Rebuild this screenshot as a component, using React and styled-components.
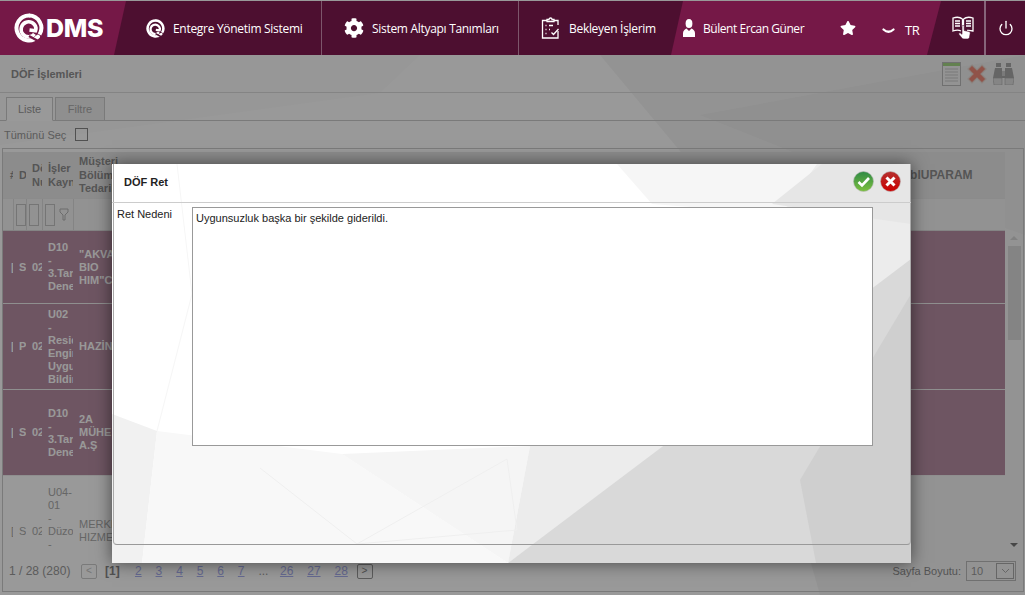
import React from 'react';
import styled, { createGlobalStyle } from 'styled-components';
import { FaCog, FaStar } from 'react-icons/fa';
import { FiPower } from 'react-icons/fi';

const GlobalStyle = createGlobalStyle`
  html, body {
    margin: 0;
    padding: 0;
    height: 595px;
    overflow: hidden;
    background: #fff;
  }
  * { box-sizing: border-box; }
`;

const bodyFont = `"Liberation Sans", Tahoma, sans-serif`;

const Shell = styled.div`
  position: relative;
  width: 1025px;
  height: 595px;
  overflow: hidden;
  font-family: ${bodyFont};
  font-size: 11px;
  color: #444;
`;

/* top bar */
const TopBar = styled.header`
  position: relative;
  z-index: 5;
  display: flex;
  height: 55px;
  border-top: 1px solid #999;
  background: #4d0f30;
  color: #fff;
  font-family: "Open Sans", sans-serif;
  font-size: 12px;
  letter-spacing: -0.3px;
`;

const LogoBox = styled.div`
  flex: 0 0 126px;
  display: flex;
  align-items: center;
  gap: 2px;
  padding-left: 14px;
  background: #751847;
  clip-path: polygon(0 0, 100% 0, 114px 100%, 0 100%);
`;

const LogoText = styled.span`
  font-family: Inter, sans-serif;
  font-weight: 800;
  font-size: 25px;
  letter-spacing: -0.3px;
`;

const NavItem = styled.div`
  flex: 0 0 ${(p) => p.$w}px;
  display: flex;
  align-items: center;
  gap: 8px;
  padding-left: ${(p) => p.$pad}px;
  border-right: ${(p) => (p.$line ? '1px solid #7d566b' : 'none')};
  white-space: nowrap;
`;

const UserBox = styled.div`
  flex: 0 0 270px;
  margin-left: -12px;
  display: flex;
  align-items: center;
  padding-left: 12px;
  background: #751847;
  clip-path: polygon(12px 0, 100% 0, 256px 100%, 0 100%);
`;

const UserName = styled.span`
  margin-left: 8px;
  width: 137px;
  white-space: nowrap;
  letter-spacing: -0.45px;
`;

const ChevronWrap = styled.span`
  display: flex;
  margin: 6px 0 0 26px;
`;

const Lang = styled.span`
  margin: 4px 0 0 10px;
  font-size: 13px;
`;

const BookBox = styled.div`
  flex: 0 0 48px;
  margin-left: -14px;
  padding-left: 25px;
  display: flex;
  align-items: center;
`;

const PowerBox = styled.div`
  flex: 1;
  display: flex;
  align-items: center;
  justify-content: center;
  border-left: 2px solid #86647a;
  margin-left: 9px;
  font-size: 16px;
`;

/* page below the bar */
const Page = styled.main`
  position: relative;
  height: 540px;
  background: #fff;
`;

const PageArt = styled.svg`
  position: absolute;
  inset: 0;
  width: 100%;
  height: 100%;
`;

const PageInner = styled.div`
  position: relative;
  display: flex;
  flex-direction: column;
  height: 100%;
`;

const TitleRow = styled.div`
  flex: 0 0 38px;
  display: flex;
  align-items: center;
  justify-content: space-between;
  padding: 0 11px 0 11px;
  border-bottom: 1px solid #ddd;
  font-weight: 700;
  color: #909090;
`;

const Tools = styled.div`
  display: flex;
  align-items: center;
  gap: 6px;
`;

const Tabs = styled.div`
  flex: 0 0 28px;
  display: flex;
  align-items: flex-end;
  gap: 2px;
  padding-left: 6px;
  border-bottom: 1px solid #ccc;
`;

const Tab = styled.div`
  width: ${(p) => p.$w}px;
  height: 24px;
  margin-bottom: -1px;
  display: flex;
  align-items: center;
  justify-content: center;
  border: 1px solid #ccc;
  border-bottom: ${(p) => (p.$active ? '1px solid #fff' : '1px solid #ccc')};
  background: ${(p) => (p.$active ? '#fff' : '#eee')};
  color: ${(p) => (p.$active ? '#999' : '#aaa')};
`;

const SelectRow = styled.div`
  flex: 0 0 27px;
  display: flex;
  align-items: center;
  gap: 9px;
  padding-left: 4px;
  color: #999;
`;

const CheckBox = styled.span`
  width: 13px;
  height: 13px;
  border: 1px solid #888;
`;

const GridFrame = styled.section`
  flex: 1;
  margin: 0 1px 3px 2px;
  padding: 3px 0 0 0;
  border: 1px solid #ccc;
  display: flex;
  flex-direction: column;
  min-height: 0;
`;

const cols = '10px 13px 16px 31px 120px 1fr';

const HeadRow = styled.div`
  flex: 0 0 46px;
  margin-right: 18px;
  display: grid;
  grid-template-columns: ${cols} 113px;
  align-items: center;
  background: #eaeaea;
  font-weight: 700;
  color: #8e8e8e;
  line-height: 13.5px;
`;

const HeadCell = styled.div`
  overflow: hidden;
  padding: 1px 0 0 ${(p) => p.$pad ?? 6}px;
  font-size: ${(p) => (p.$big ? 12 : 11)}px;
`;

const FilterRow = styled.div`
  flex: 0 0 33px;
  margin-right: 18px;
  display: grid;
  grid-template-columns: ${cols};
  align-items: center;
  background: #f3f3f3;
  border-bottom: 1px solid #ddd;
  border-top: 1px solid #e8e8e8;
`;

const FilterCell = styled.div`
  height: 100%;
  display: flex;
  align-items: center;
  gap: 4px;
  padding-left: 2px;
  border-left: ${(p) => (p.$line ? '1px solid #ddd' : 'none')};
`;

const FilterInput = styled.span`
  width: ${(p) => p.$w}px;
  height: 22px;
  border: 1px solid #c4c4c4;
`;

const BodyArea = styled.div`
  flex: 1;
  display: flex;
  min-height: 0;
  overflow: hidden;
`;

const Rows = styled.div`
  flex: 1;
  overflow: hidden;
`;

const Row = styled.div`
  height: ${(p) => p.$h}px;
  display: grid;
  grid-template-columns: ${cols};
  align-items: center;
  overflow: hidden;
  background: ${(p) => (p.$marked ? '#b88ea3' : 'transparent')};
  border-bottom: ${(p) => (p.$marked ? '1px solid #eee' : 'none')};
  font-weight: ${(p) => (p.$marked ? 700 : 400)};
  color: ${(p) => (p.$marked ? '#fff' : '#aaa')};
  line-height: 13px;
`;

const Cell = styled.div`
  overflow: hidden;
  padding-left: ${(p) => p.$pad ?? 6}px;
  white-space: nowrap;
`;

const Line = styled.div`
  white-space: nowrap;
`;

const ScrollBar = styled.div`
  flex: 0 0 18px;
  display: flex;
  flex-direction: column;
  align-items: center;
  padding-top: 5px;
  gap: 6px;
`;

const ScrollThumb = styled.div`
  width: 13px;
  height: 94px;
  background: #dcdcdc;
`;

const ScrollGap = styled.div`
  flex: 1;
`;

const ArrowUp = styled.div`
  width: 0;
  height: 0;
  border-left: 4px solid transparent;
  border-right: 4px solid transparent;
  border-bottom: 4px solid #d8d8d8;
`;

const ArrowDown = styled(ArrowUp)`
  border-bottom: none;
  border-top: 4px solid #777;
  margin-bottom: 6px;
`;

const Pager = styled.div`
  flex: 0 0 38px;
  display: flex;
  align-items: center;
  padding: 0 7px 2px 6px;
  color: #999;
  font-size: 12px;
`;

const PageCount = styled.span`
  width: 72px;
`;

const PageBox = styled.span`
  width: 16px;
  height: 15px;
  margin-right: ${(p) => p.$mr ?? 0}px;
  display: flex;
  align-items: center;
  justify-content: center;
  border: 1px solid ${(p) => (p.$dark ? '#999' : '#ccc')};
  border-radius: 2px;
  font-family: "Liberation Mono", monospace;
  font-size: 10px;
  color: ${(p) => (p.$dark ? '#888' : '#c4c4c4')};
`;

const CurrentPage = styled.b`
  margin-right: 15.3px;
  color: #888;
`;

const PageLink = styled.a`
  margin-right: ${(p) => p.$mr ?? 13.9}px;
  color: #a9aff0;
  text-decoration: underline;
`;

const Dots = styled.span`
  margin-right: 11.5px;
`;

const PageSize = styled.div`
  margin-left: auto;
  display: flex;
  align-items: center;
  gap: 5px;
  font-size: 11px;
  color: #8c8c8c;
`;

const SizeSelect = styled.div`
  width: 50px;
  height: 20px;
  display: flex;
  align-items: center;
  justify-content: space-between;
  padding: 0 1px 0 4px;
  border: 1px solid #bbb;
  color: #999;
`;

const SizeArrow = styled.span`
  width: 18px;
  height: 16px;
  border: 1px solid #aaa;
  display: flex;
  align-items: center;
  justify-content: center;
`;

/* dialog */
const Dim = styled.div`
  position: absolute;
  left: 0;
  right: 0;
  top: 55px;
  bottom: 0;
  background: rgba(0, 0, 0, 0.4);
  z-index: 3;
`;

const Dialog = styled.div`
  position: absolute;
  left: 112px;
  top: 164px;
  width: 799px;
  height: 399px;
  z-index: 4;
  background: #fff;
  box-shadow: 0 0 16px rgba(0, 0, 0, 0.55);
  font-size: 11px;
  color: #222;
`;

const DialogArt = styled.svg`
  position: absolute;
  inset: 0;
  width: 100%;
  height: 100%;
`;

const DialogFrame = styled.div`
  position: relative;
  height: 381px;
  margin-left: 1px;
  border-bottom: 1px solid #999;
  border-right: 1px solid #aaa;
  border-left: 1px solid #aaa;
  border-radius: 0 0 4px 4px;
`;

const DialogHead = styled.div`
  height: 39px;
  margin-left: -2px;
  margin-right: -1px;
  display: flex;
  align-items: center;
  justify-content: space-between;
  padding: 0 10px 3px 12px;
  border-bottom: 1px solid #ccc;
  font-weight: 700;
`;

const DialogActions = styled.div`
  display: flex;
  gap: 6px;
`;

const DialogBody = styled.div`
  display: flex;
  padding: 4px 0 0 3px;
`;

const FieldLabel = styled.label`
  flex: 0 0 75px;
  padding-top: 1px;
`;

const ReasonBox = styled.div`
  width: 681px;
  height: 239px;
  padding: 4px 3px;
  background: #fff;
  border: 1px solid #999;
`;

const QMark = ({ size = 30, dark }) => (
  <svg width={size} height={size} viewBox="0 0 30 30">
    <path d="M15 2.5a12.5 12.5 0 1 0 9 21.2" fill="none" stroke="#fff" strokeWidth="4" strokeLinecap="round" />
    <path d="M25.5 21.5A12.5 12.5 0 0 0 15 2.5" fill="none" stroke="#fff" strokeWidth="4" />
    <path d="M20.5 21A7.5 7.5 0 1 1 22 15c0 1-.2 2-.5 2.8l-6-.8" fill="none" stroke="#fff" strokeWidth="3.6" />
    <path d="M15 23l9 5" stroke={dark ? '#4d0f30' : '#751847'} strokeWidth="2.4" />
  </svg>
);

const ClipboardIcon = () => (
  <svg width="20" height="22" viewBox="0 0 20 22" fill="none" stroke="#fff" strokeWidth="1.3">
    <path d="M6 3.5H1.5v17.5h15.5V14M13 3.5h4V8" />
    <path d="M6 4.5V2.5h2a1.5 1.5 0 0 1 3 0h2v2z" />
    <path d="M4.5 8.5h1M4.5 12.5h1M4.5 16.5h1M8 8.5h4M8 12.5h1" strokeWidth="1.6" />
    <path d="M10.5 15.5l2 2 5-5.5" />
  </svg>
);

const UserIcon = () => (
  <svg width="12" height="18" viewBox="0 0 12 18" fill="#fff">
    <ellipse cx="6" cy="4.5" rx="3.4" ry="4.5" />
    <path d="M0 18v-4c0-2.5 2.5-4 3.5-4.5L6 12l2.5-2.5c1 .5 3.5 2 3.5 4.5v4z" />
  </svg>
);

const SmileChevron = () => (
  <svg width="13" height="7" viewBox="0 0 13 7">
    <path d="M1.5 1.5q5 4.500 10 0" fill="none" stroke="#fff" strokeWidth="2.2" strokeLinecap="round" />
  </svg>
);

const BookHandIcon = () => (
  <svg width="22" height="24" viewBox="0 0 22 24" fill="none" stroke="#fff" strokeWidth="1.3">
    <path d="M10.5 3C8 1 4 1 1 2v13c3-1 6-1 8 0M11.5 3c2.5-2 6.5-2 9.5-1v13c-2-.5-4-.8-6-.5M10.5 3v8M11.5 3v8" />
    <path d="M3 5h5M3 7.5h5M3 10h5M14 5h5M14 7.5h5M14 10h5" />
    <path
      d="M10 10.5c0-1.5 2.2-1.5 2.2 0v4l5 1c.8.3 1 1 1 1.8l-.7 4c-.3 1.2-1 1.7-2 1.7h-3.5c-1 0-1.7-.5-2.3-1.3L7 18.5c-.7-1.200.7-2.200 1.700-1.300l1.300 1.100z"
      fill="#fff"
      stroke="#4d0f30"
      strokeWidth=".6"
    />
  </svg>
);

const TableIcon = () => (
  <svg width="19" height="24" viewBox="0 0 19 24">
    <rect x=".5" y=".5" width="18" height="23" fill="#f5f5f5" stroke="#bbb" />
    <rect x="1" y="1" width="17" height="3" fill="#a6d785" />
    <path d="M3 7h13M3 10h13M3 13h13M3 16h13M3 19h13" stroke="#c9c9c9" />
  </svg>
);

const CrossIcon = () => (
  <svg width="20" height="20" viewBox="0 0 20 20">
    <path d="M5 1l5 5 5-5 4 4-5 5 5 5-4 4-5-5-5 5-4-4 5-5-5-5z" fill="#f08a7a" stroke="#e8d8d0" strokeWidth="1.2" />
  </svg>
);

const BinocularsIcon = () => (
  <svg width="21" height="22" viewBox="0 0 21 22">
    <rect x="3" y="0" width="5" height="4" fill="#a8a8a8" />
    <rect x="13" y="0" width="5" height="4" fill="#a8a8a8" />
    <path d="M2 5h7v3h3V5h7l2 10H0z" fill="#a8a8a8" />
    <path d="M9 8h3v5H9z" fill="#ccc" />
    <path d="M0 15h9v7H1zM12 15h9l-1 7h-8z" fill="#dedede" stroke="#aaa" strokeWidth=".6" />
  </svg>
);

const CircleButton = ({ from, to, children }) => (
  <svg width="21" height="21" viewBox="0 0 21 21">
    <defs>
      <linearGradient id={from.slice(1)} x1="0" y1="0" x2="0" y2="1">
        <stop offset="0" stopColor={from} />
        <stop offset="1" stopColor={to} />
      </linearGradient>
    </defs>
    <circle cx="10.5" cy="10.5" r="10" fill={`url(#${from.slice(1)})`} stroke="#bbb" strokeWidth=".6" />
    {children}
  </svg>
);

const FunnelIcon = () => (
  <svg width="10" height="13" viewBox="0 0 10 13" fill="none" stroke="#b5b5b5">
    <path d="M1 1h8v3L6 7v5H4V7L1 4z" />
  </svg>
);

const rows = [
  { h: 73, marked: true, a: '[', b: 'S', work: ['D10', '-', '3.Tar', 'Dene'], who: ['"AKVA', 'BIO', 'HIM"C'] },
  { h: 86, marked: true, a: '[', b: 'Pl', work: ['U02', '-', 'Resid', 'Engir', 'Uygu', 'Bildiri'], who: ['HAZİN'] },
  { h: 86, marked: true, a: '[', b: 'S', work: ['D10', '-', '3.Tar', 'Dene'], who: ['2A', 'MÜHE', 'A.Ş'] },
  { h: 110, a: '[', b: 'S', work: ['U04-', '01', '-', 'Düzo', '-', 'Müş', ''], who: ['MERKI', 'HIZME'] },
];

const pages = ['2', '3', '4', '5', '6', '7'];

export default function App() {
  return (
    <Shell>
      <GlobalStyle />
      <TopBar>
        <LogoBox>
          <QMark />
          <LogoText>DMS</LogoText>
        </LogoBox>
        <NavItem $w={196} $pad={20} $line>
          <QMark size={19} dark />
          Entegre Yönetim Sistemi
        </NavItem>
        <NavItem $w={197} $pad={22} $line>
          <FaCog size={20} />
          Sistem Altyapı Tanımları
        </NavItem>
        <NavItem $w={164} $pad={22}>
          <ClipboardIcon />
          Bekleyen İşlerim
        </NavItem>
        <UserBox>
          <UserIcon />
          <UserName>Bülent Ercan Güner</UserName>
          <FaStar size={16} />
          <ChevronWrap>
            <SmileChevron />
          </ChevronWrap>
          <Lang>TR</Lang>
        </UserBox>
        <BookBox>
          <BookHandIcon />
        </BookBox>
        <PowerBox>
          <FiPower />
        </PowerBox>
      </TopBar>

      <Page>
        <PageArt viewBox="0 0 1025 540" preserveAspectRatio="none">
          <polygon points="600,0 1025,0 1025,540 820,540 700,120" fill="#f6f6f6" />
          <polygon points="700,60 1025,0 1025,180 850,120" fill="#f0f0f0" />
          <polygon points="0,0 420,0 380,38 0,90" fill="#fcfcfc" />
        </PageArt>
        <PageInner>
          <TitleRow>
            DÖF İşlemleri
            <Tools>
              <TableIcon />
              <CrossIcon />
              <BinocularsIcon />
            </Tools>
          </TitleRow>
          <Tabs>
            <Tab $w={47} $active>Liste</Tab>
            <Tab $w={50}>Filtre</Tab>
          </Tabs>
          <SelectRow>
            Tümünü Seç
            <CheckBox />
          </SelectRow>
          <GridFrame>
            <HeadRow>
              <HeadCell $pad={7}>#</HeadCell>
              <HeadCell>D</HeadCell>
              <HeadCell><Line>Dö</Line><Line>Nu</Line></HeadCell>
              <HeadCell><Line>İşler</Line><Line>Kayn</Line></HeadCell>
              <HeadCell><Line>Müşteri</Line><Line>Bölüm</Line><Line>Tedarik</Line></HeadCell>
              <HeadCell />
              <HeadCell $big $pad={5}><Line>TablUPARAM</Line></HeadCell>
            </HeadRow>
            <FilterRow>
              <FilterCell />
              <FilterCell $line><FilterInput $w={10} /></FilterCell>
              <FilterCell $line><FilterInput $w={10} /></FilterCell>
              <FilterCell $line><FilterInput $w={10} /><FunnelIcon /></FilterCell>
              <FilterCell $line />
            </FilterRow>
            <BodyArea>
              <Rows>
                {rows.map((row, i) => (
                  <Row key={i} $h={row.h} $marked={row.marked}>
                    <Cell $pad={8}>{row.a}</Cell>
                    <Cell>{row.b}</Cell>
                    <Cell>02</Cell>
                    <Cell>{row.work.map((t, j) => <Line key={j}>{t || '\u00a0'}</Line>)}</Cell>
                    <Cell>{row.who.map((t, j) => <Line key={j}>{t}</Line>)}</Cell>
                  </Row>
                ))}
              </Rows>
              <ScrollBar>
                <ArrowUp />
                <ScrollThumb />
                <ScrollGap />
                <ArrowDown />
              </ScrollBar>
            </BodyArea>
            <Pager>
              <PageCount>1 / 28 (280)</PageCount>
              <PageBox $mr={8}>&lt;</PageBox>
              <CurrentPage>[1]</CurrentPage>
              {pages.map((p) => <PageLink key={p}>{p}</PageLink>)}
              <Dots>...</Dots>
              <PageLink>26</PageLink>
              <PageLink>27</PageLink>
              <PageLink $mr={8.7}>28</PageLink>
              <PageBox $dark>&gt;</PageBox>
              <PageSize>
                Sayfa Boyutu:
                <SizeSelect>
                  10
                  <SizeArrow>
                    <svg width="9" height="6" viewBox="0 0 9 6">
                      <path d="M1 1l3.5 3.5L8 1" fill="none" stroke="#aaa" />
                    </svg>
                  </SizeArrow>
                </SizeSelect>
              </PageSize>
            </Pager>
          </GridFrame>
        </PageInner>
      </Page>

      <Dim />

      <Dialog>
        <DialogArt viewBox="0 0 799 399">
          <polygon points="505,0 799,0 799,60 540,40" fill="#f6f6f6" />
          <polygon points="0,250 45,267 30,399 0,399" fill="#f1f1f1" />
          <polygon points="45,267 230,290 396,399 30,399" fill="#f8f8f8" />
          <polygon points="230,290 418,282 396,399" fill="#f5f5f5" />
          <polygon points="396,399 418,282 620,120 705,0 799,0 799,105" fill="#ececec" />
          <polygon points="660,40 710,0 799,0 799,60" fill="#e6e6e6" />
          <polygon points="396,399 799,95 799,399" fill="#d9d9d9" />
          <polygon points="688,316 704,399 799,399 799,130" fill="#cfcfcf" />
          <polyline points="148,304 245,380 405,366 395,295 245,380" fill="none" stroke="#efefef" />
          <polyline points="45,267 80,130 65,0" fill="none" stroke="#f6f6f6" />
        </DialogArt>
        <DialogFrame>
          <DialogHead>
            DÖF Ret
            <DialogActions>
              <CircleButton from="#2f8a45" to="#7cc03f">
                <path d="M5.5 11l3.5 3.5 7-7.5" fill="none" stroke="#fff" strokeWidth="2.6" />
              </CircleButton>
              <CircleButton from="#b5302f" to="#cc0000">
                <path d="M6.5 6.5l8 8M14.5 6.5l-8 8" fill="none" stroke="#fff" strokeWidth="3" />
              </CircleButton>
            </DialogActions>
          </DialogHead>
          <DialogBody>
            <FieldLabel>Ret Nedeni</FieldLabel>
            <ReasonBox>Uygunsuzluk başka bir şekilde giderildi.</ReasonBox>
          </DialogBody>
        </DialogFrame>
      </Dialog>
    </Shell>
  );
}
